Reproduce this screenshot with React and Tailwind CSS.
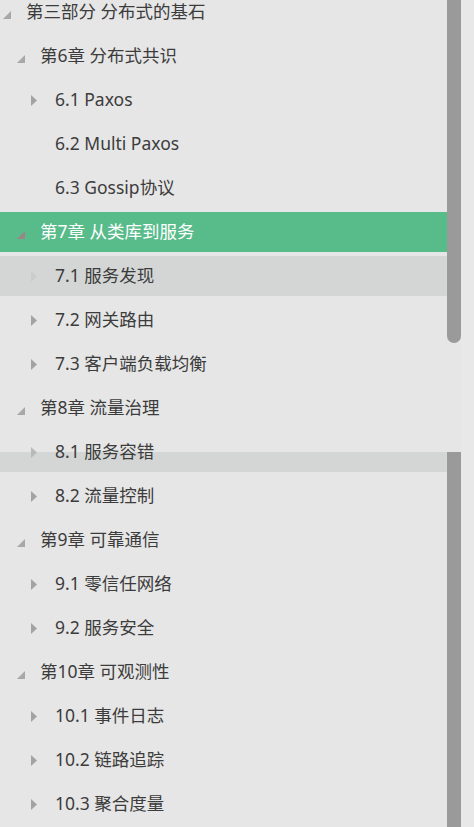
import React from 'react';

const ITEMS = [
    { lv: 0, text: '第三部分 分布式的基石', icon: 'open' },
    { lv: 1, text: '第6章 分布式共识', icon: 'open' },
    { lv: 2, text: '6.1 Paxos', icon: 'closed' },
    { lv: 2, text: '6.2 Multi Paxos', icon: 'none' },
    { lv: 2, text: '6.3 Gossip协议', icon: 'none' },
    { lv: 1, text: '第7章 从类库到服务', icon: 'open', state: 'active' },
    { lv: 2, text: '7.1 服务发现', icon: 'closed', state: 'hover' },
    { lv: 2, text: '7.2 网关路由', icon: 'closed' },
    { lv: 2, text: '7.3 客户端负载均衡', icon: 'closed' },
    { lv: 1, text: '第8章 流量治理', icon: 'open' },
    { lv: 2, text: '8.1 服务容错', icon: 'closed', state: 'half' },
    { lv: 2, text: '8.2 流量控制', icon: 'closed' },
    { lv: 1, text: '第9章 可靠通信', icon: 'open' },
    { lv: 2, text: '9.1 零信任网络', icon: 'closed' },
    { lv: 2, text: '9.2 服务安全', icon: 'closed' },
    { lv: 1, text: '第10章 可观测性', icon: 'open' },
    { lv: 2, text: '10.1 事件日志', icon: 'closed' },
    { lv: 2, text: '10.2 链路追踪', icon: 'closed' },
    { lv: 2, text: '10.3 聚合度量', icon: 'closed' },
];

const PAD = ['pl-[3px]', 'pl-[17px]', 'pl-[31px]'];

function Caret({ type, state }) {
    if (type === 'none') return <span className="w-[24px] shrink-0" />;
    if (type === 'open') {
        const fill = state === 'active' ? '#9a8686' : '#a8a8a8';
        return (
            <span className="w-[23px] shrink-0 flex">
                <svg width="8" height="8" viewBox="0 0 8 8" className="mt-[6px]">
                    <polygon points="8,0 8,8 0,8" fill={fill} />
                </svg>
            </span>
        );
    }
    const fill = state === 'hover' ? '#c9cccb' : state === 'half' ? '#b9b9b9' : '#a3a3a3';
    return (
        <span className="w-[24px] shrink-0 flex">
            <svg width="6" height="11" viewBox="0 0 6 11" className="mt-[1px]">
                <polygon points="0,0 6,5.5 0,11" fill={fill} />
            </svg>
        </span>
    );
}

function Row({ item }) {
    const { lv, text, icon, state } = item;
    let band = '';
    if (state === 'active') band = 'bg-[#57bb8a] text-white';
    if (state === 'hover') band = 'bg-[#d3d6d5] text-[#3c3c3c]';
    return (
        <div className="h-[44px] py-[2px] relative">
            {state === 'half' && (
                <div className="absolute left-0 right-0 top-[22px] h-[20px] bg-[#d3d6d5]" />
            )}
            <div className={`relative h-[40px] flex items-center ${PAD[lv]} ${band || 'text-[#3c3c3c]'}`}>
                <Caret type={icon} state={state} />
                <span className="text-[17.5px] leading-none whitespace-nowrap -mt-[1px]">{text}</span>
            </div>
        </div>
    );
}

export default function App() {
    return (
        <div
            className="w-[474px] h-[827px] overflow-hidden bg-[#e6e6e6] flex"
            style={{ fontFamily: '"Noto Sans", "Noto Sans CJK SC", sans-serif' }}
        >
            <div className="w-[447px] shrink-0 -mt-[10px]">
                {ITEMS.map((item, i) => (
                    <Row key={i} item={item} />
                ))}
            </div>
            {/* scrollbar */}
            <div className="w-[14px] shrink-0 flex flex-col">
                <div className="h-[343px] bg-[#9a9a9a] rounded-b-full" />
                <div className="h-[109px]" />
                <div className="flex-1 bg-[#9a9a9a]" />
            </div>
            <div className="flex-1 bg-[#e8e8e8]" />
        </div>
    );
}
